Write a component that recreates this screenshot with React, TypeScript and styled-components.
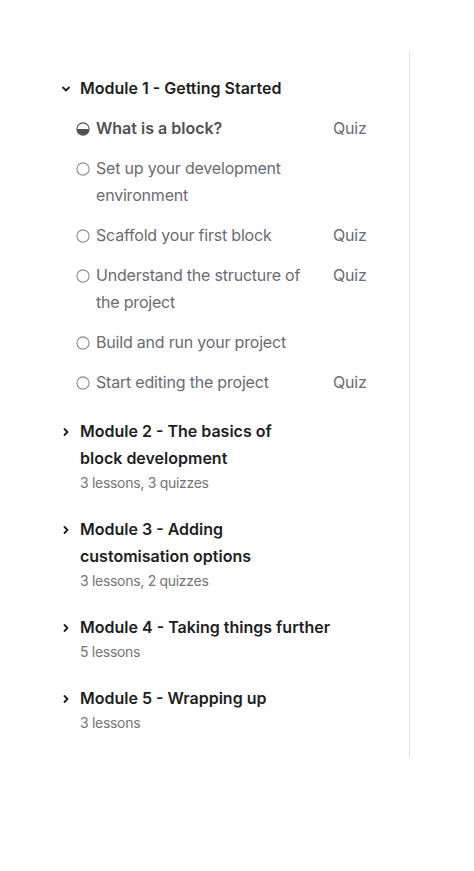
import * as React from 'react'
import styled, { createGlobalStyle } from 'styled-components'

const GlobalStyle = createGlobalStyle`
  body {
    margin: 0;
    background: #fff;
    font-family: Inter, "Noto Sans", sans-serif;
    -webkit-font-smoothing: antialiased;
  }
`

const Page = styled.div`
  padding: 52px 0 0 40px;
`

const Sidebar = styled.nav`
  box-sizing: border-box;
  width: 370px;
  padding: 23px 43px 23px 18px;
  border-right: 1px solid #e0e0e0;
  display: flex;
  flex-direction: column;
  gap: 22px;
`

const Module = styled.section`
  display: flex;
  flex-direction: column;
`

const ModuleHeader = styled.div`
  display: flex;
  align-items: flex-start;
  gap: 6px;
`

const ChevronBox = styled.span`
  flex: none;
  width: 16px;
  height: 27px;
  display: flex;
  align-items: center;
  justify-content: center;
  color: #1e1e1e;
`

const ModuleTitle = styled.h3`
  margin: 0;
  font-size: 16px;
  line-height: 27px;
  font-weight: 600;
  color: #1e1e1e;
  text-wrap: pretty;
`

const ModuleMeta = styled.div`
  margin-top: 1px;
  padding: 0 0 1px 22px;
  font-size: 14px;
  line-height: 20px;
  letter-spacing: -0.3px;
  color: #757575;
`

const LessonList = styled.ul`
  list-style: none;
  margin: 13px 0 0;
  padding: 0 0 0 18px;
  display: flex;
  flex-direction: column;
  gap: 13px;
`

const LessonRow = styled.li`
  display: flex;
  align-items: flex-start;
  gap: 16px;
`

const LessonMain = styled.div`
  flex: 1;
  display: flex;
  align-items: flex-start;
  gap: 6px;
`

const StatusBox = styled.span`
  flex: none;
  width: 14px;
  height: 27px;
  display: flex;
  align-items: center;
  justify-content: center;
`

const LessonTitle = styled.span<{ $active?: boolean }>`
  font-size: 16px;
  line-height: 27px;
  letter-spacing: ${(p) => (p.$active ? '0' : '-0.2px')};
  font-weight: ${(p) => (p.$active ? 600 : 400)};
  color: ${(p) => (p.$active ? '#50505a' : '#6b6b73')};
`

const QuizTag = styled.span`
  flex: none;
  width: 33px;
  font-size: 16px;
  line-height: 27px;
  letter-spacing: -0.2px;
  color: #6b6b73;
`

const Chevron = ({ open }: { open?: boolean }) => (
  <svg width="16" height="16" viewBox="0 0 16 16" fill="none">
    <path
      d={open ? 'M5 6.5 8 9.5 11 6.5' : 'M6.5 5 9.5 8 6.5 11'}
      stroke="currentColor"
      strokeWidth="1.8"
      strokeLinecap="round"
      strokeLinejoin="round"
    />
  </svg>
)

const Status = ({ active }: { active?: boolean }) => (
  <svg width="14" height="14" viewBox="0 0 14 14">
    {active && <path d="M0.9 7a6.1 6.1 0 0 0 12.2 0z" fill="#4f4f57" />}
    <circle cx="7" cy="7" r="6.1" fill="none" stroke={active ? '#4f4f57' : '#8a8a90'} strokeWidth="1.1" />
  </svg>
)

interface ILesson {
  title: string
  quiz?: boolean
  active?: boolean
}

interface IModule {
  title: string
  meta?: string
  lessons?: ILesson[]
}

// non-breaking spaces keep the last words of a title together
const modules: IModule[] = [
  {
    title: 'Module 1 - Getting Started',
    lessons: [
      { title: 'What is a block?', quiz: true, active: true },
      { title: 'Set up your development environment' },
      { title: 'Scaffold your first block', quiz: true },
      { title: 'Understand the structure of the project', quiz: true },
      { title: 'Build and run your project' },
      { title: 'Start editing the project', quiz: true }
    ]
  },
  { title: 'Module 2 - The basics of block\u00a0development', meta: '3 lessons, 3 quizzes' },
  { title: 'Module 3 - Adding customisation\u00a0options', meta: '3 lessons, 2 quizzes' },
  { title: 'Module 4 - Taking things further', meta: '5 lessons' },
  { title: 'Module 5 - Wrapping up', meta: '3 lessons' }
]

export default function App() {
  return (
    <Page>
      <GlobalStyle />
      <Sidebar>
        {modules.map((m) => (
          <Module key={m.title}>
            <ModuleHeader>
              <ChevronBox>
                <Chevron open={!!m.lessons} />
              </ChevronBox>
              <ModuleTitle>{m.title}</ModuleTitle>
            </ModuleHeader>
            {m.meta && <ModuleMeta>{m.meta}</ModuleMeta>}
            {m.lessons && (
              <LessonList>
                {m.lessons.map((l) => (
                  <LessonRow key={l.title}>
                    <LessonMain>
                      <StatusBox>
                        <Status active={l.active} />
                      </StatusBox>
                      <LessonTitle $active={l.active}>{l.title}</LessonTitle>
                    </LessonMain>
                    <QuizTag>{l.quiz ? 'Quiz' : ''}</QuizTag>
                  </LessonRow>
                ))}
              </LessonList>
            )}
          </Module>
        ))}
      </Sidebar>
    </Page>
  )
}
